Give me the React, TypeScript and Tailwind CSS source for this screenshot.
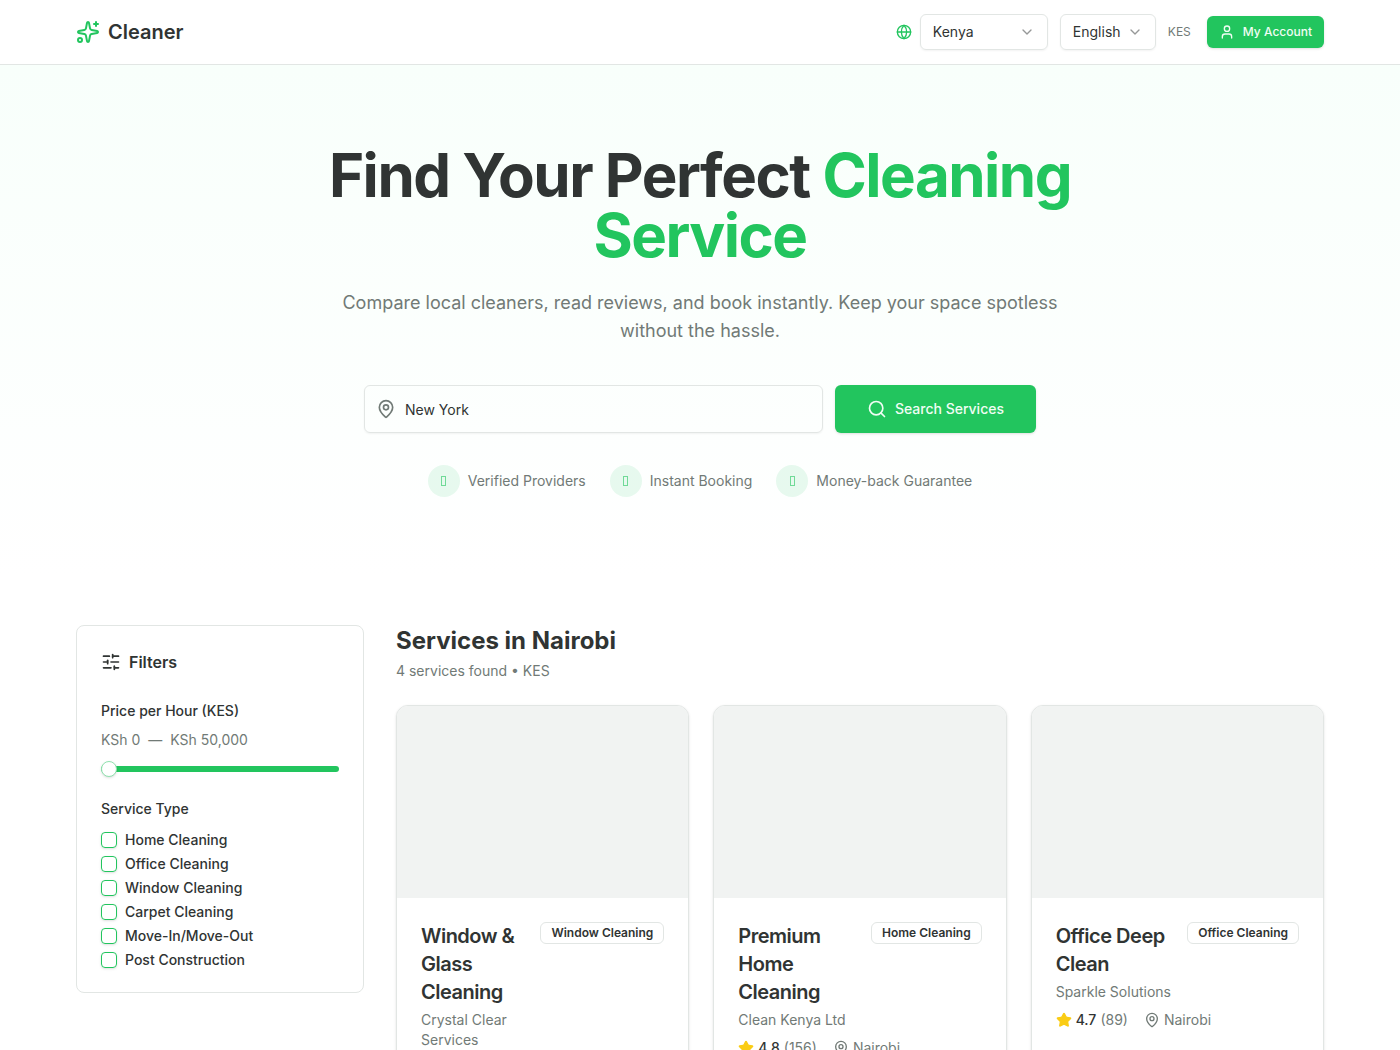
import { useState } from "react";
import { ChevronDown, Globe, MapPin, Search, SlidersHorizontal, Sparkles, Star, User } from "lucide-react";

type Service = {
  name: string;
  provider: string;
  type: string;
  rating?: number;
  reviews?: number;
  city?: string;
};

const SERVICE_TYPES = [
  "Home Cleaning",
  "Office Cleaning",
  "Window Cleaning",
  "Carpet Cleaning",
  "Move-In/Move-Out",
  "Post Construction",
];

const SERVICES: Service[] = [
  { name: "Window & Glass Cleaning", provider: "Crystal Clear Services", type: "Window Cleaning" },
  { name: "Premium Home Cleaning", provider: "Clean Kenya Ltd", type: "Home Cleaning", rating: 4.8, reviews: 156, city: "Nairobi" },
  { name: "Office Deep Clean", provider: "Sparkle Solutions", type: "Office Cleaning", rating: 4.7, reviews: 89, city: "Nairobi" },
];

const PERKS = ["Verified Providers", "Instant Booking", "Money-back Guarantee"];

const MAX_PRICE = 50000;

function HeaderSelect({ label, options, className }: { label: string; options: string[]; className: string }) {
  return (
    <div className={`relative ${className}`}>
      <select
        aria-label={label}
        className="h-9 w-full appearance-none rounded-md border border-[#e2e6e4] bg-transparent px-3 text-sm shadow-xs"
      >
        {options.map((option) => (
          <option key={option}>{option}</option>
        ))}
      </select>
      <ChevronDown size={16} className="pointer-events-none absolute top-[10px] right-[13px] opacity-50" />
    </div>
  );
}

function Header() {
  return (
    <header className="border-b border-[#e2e6e4] bg-white">
      <div className="mx-auto flex h-16 max-w-7xl items-center justify-between px-4">
        <a href="#" className="flex items-center gap-2">
          <Sparkles size={24} className="text-[#22c55e]" />
          <span className="text-xl font-semibold">Cleaner</span>
        </a>
        <div className="flex items-center gap-4">
          <div className="flex items-center gap-3">
            <div className="flex items-center gap-2">
              <Globe size={16} className="text-[#22c55e]" />
              <HeaderSelect label="Country" options={["Kenya"]} className="w-32" />
            </div>
            <HeaderSelect label="Language" options={["English"]} className="w-24" />
            <span className="text-xs text-[#717a76]">KES</span>
          </div>
          <button className="flex h-8 items-center gap-2 rounded-md bg-[#22c55e] px-3 text-xs font-medium text-green-50 shadow-sm hover:bg-green-600">
            <User size={16} />
            My Account
          </button>
        </div>
      </div>
    </header>
  );
}

function Hero() {
  const [location, setLocation] = useState("New York");

  return (
    <section className="bg-linear-to-b from-[#f8fffb] to-white px-4 py-20">
      <div className="mx-auto flex max-w-3xl flex-col items-center text-center">
        <h1 className="mb-6 text-6xl leading-none font-bold tracking-tight">
          Find Your Perfect <span className="text-[#22c55e]">Cleaning Service</span>
        </h1>
        <p className="mb-10 text-lg leading-7 text-[#717a76]">
          Compare local cleaners, read reviews, and book instantly. Keep your space spotless without the hassle.
        </p>
        <form onSubmit={(e) => e.preventDefault()} className="flex w-full max-w-2xl gap-3">
          <div className="relative flex-1">
            <MapPin size={20} className="absolute top-[14px] left-3 text-[#717a76]" />
            <input
              type="text"
              aria-label="Location"
              value={location}
              onChange={(e) => setLocation(e.target.value)}
              className="h-12 w-full rounded-md border border-[#e2e6e4] bg-transparent pr-3 pl-10 text-sm shadow-xs"
            />
          </div>
          <button
            type="submit"
            className="flex h-12 items-center gap-2 rounded-md bg-[#22c55e] px-8 text-sm font-medium text-green-50 shadow-sm hover:bg-green-600"
          >
            <Search size={20} />
            Search Services
          </button>
        </form>
        <ul className="mt-8 flex flex-wrap justify-center gap-6 text-sm text-[#717a76]">
          {PERKS.map((perk) => (
            <li key={perk} className="flex items-center gap-2">
              <span className="flex size-8 items-center justify-center rounded-full bg-[#22c55e]/10">
                <span className="h-[10px] w-[5px] border border-[#22c55e]/60" />
              </span>
              {perk}
            </li>
          ))}
        </ul>
      </div>
    </section>
  );
}

function Filters() {
  const [minPrice, setMinPrice] = useState(0);
  const start = (minPrice / MAX_PRICE) * 100;

  return (
    <aside className="w-72 shrink-0 rounded-lg border border-[#e2e6e4] p-6">
      <h2 className="mb-6 flex items-center gap-2 font-semibold">
        <SlidersHorizontal size={20} />
        Filters
      </h2>
      <div className="mb-6">
        <label htmlFor="price" className="mb-2 block leading-6">
          <span className="text-sm font-medium">Price per Hour (KES)</span>
        </label>
        <div className="mb-4 flex gap-2 text-sm text-[#717a76]">
          <span>KSh {minPrice.toLocaleString("en-US")}</span>
          <span>—</span>
          <span>KSh {MAX_PRICE.toLocaleString("en-US")}</span>
        </div>
        <input
          id="price"
          type="range"
          min={0}
          max={MAX_PRICE}
          step={500}
          value={minPrice}
          onChange={(e) => setMinPrice(Number(e.target.value))}
          style={{ backgroundImage: `linear-gradient(to right, #d3f3df ${start}%, #22c55e ${start}%)` }}
          className="block h-[6px] w-full appearance-none rounded-full [&::-webkit-slider-thumb]:size-4 [&::-webkit-slider-thumb]:appearance-none [&::-webkit-slider-thumb]:rounded-full [&::-webkit-slider-thumb]:border [&::-webkit-slider-thumb]:border-[#90e2af] [&::-webkit-slider-thumb]:bg-white [&::-webkit-slider-thumb]:shadow-sm"
        />
      </div>
      <fieldset>
        <legend className="mb-3 leading-6">
          <span className="text-sm font-medium">Service Type</span>
        </legend>
        <div className="space-y-2">
          {SERVICE_TYPES.map((type) => (
            <label key={type} className="flex h-4 items-center gap-2 text-sm font-medium">
              <input
                type="checkbox"
                className="size-4 appearance-none rounded-sm border border-[#22c55e] shadow-sm checked:bg-[#22c55e]"
              />
              {type}
            </label>
          ))}
        </div>
      </fieldset>
    </aside>
  );
}

function ServiceCard({ service }: { service: Service }) {
  return (
    <article className="overflow-hidden rounded-xl border border-[#e2e6e4] bg-white shadow-sm">
      <div className="h-48 bg-[#f1f3f2]" />
      <div className="p-6">
        <div className="flex items-start justify-between">
          <div>
            <h3 className="text-xl leading-7 font-semibold tracking-tight">{service.name}</h3>
            <p className="mt-1 text-sm text-[#717a76]">{service.provider}</p>
          </div>
          <span className="rounded-md border border-[#e2e6e4] px-2.5 py-0.5 text-xs font-semibold whitespace-nowrap">
            {service.type}
          </span>
        </div>
        {service.rating && (
          <div className="mt-2 flex items-center gap-4 text-sm text-[#717a76]">
            <div className="flex items-center gap-1">
              <Star size={16} className="fill-[#facc15] text-[#facc15]" />
              <span className="font-medium text-[#303433]">{service.rating}</span>
              <span>({service.reviews})</span>
            </div>
            <div className="flex items-center gap-1">
              <MapPin size={16} />
              {service.city}
            </div>
          </div>
        )}
      </div>
    </article>
  );
}

export default function App() {
  return (
    <div className="min-h-screen bg-white font-['Inter',sans-serif] text-[#303433]">
      <Header />
      <Hero />
      <main className="mx-auto flex max-w-7xl items-start gap-8 px-4 py-12">
        <Filters />
        <section className="min-w-0 flex-1">
          <h2 className="text-2xl font-bold">Services in Nairobi</h2>
          <p className="mt-1 mb-6 text-sm text-[#717a76]">4 services found • KES</p>
          <div className="grid grid-cols-3 gap-6">
            {SERVICES.map((service) => (
              <ServiceCard key={service.name} service={service} />
            ))}
          </div>
        </section>
      </main>
    </div>
  );
}
